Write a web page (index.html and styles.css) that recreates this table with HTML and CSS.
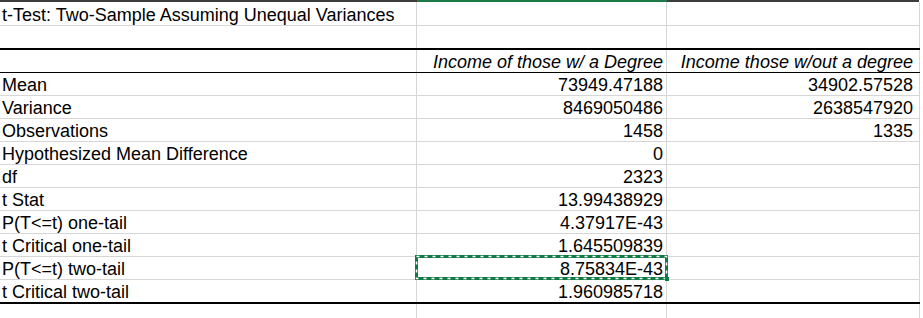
FILE: index.html
```html
<!DOCTYPE html>
<html>
<head>
<meta charset="utf-8">
<link rel="stylesheet" href="styles.css">
</head>
<body>
<div class="sheet">
  <div class="colheads">
    <div class="ch ch-a"></div>
    <div class="ch ch-b"></div>
    <div class="ch ch-c"></div>
  </div>
  <div class="row r-title">
    <div class="cell a">t-Test: Two-Sample Assuming Unequal Variances</div>
    <div class="cell b"></div>
    <div class="cell c"></div>
  </div>
  <div class="row r-blank thick">
    <div class="cell a"></div>
    <div class="cell b"></div>
    <div class="cell c"></div>
  </div>
  <div class="row r-head dark">
    <div class="cell a"></div>
    <div class="cell b hd">Income of those w/ a Degree</div>
    <div class="cell c hd">Income those w/out a degree</div>
  </div>
  <div class="row"><div class="cell a">Mean</div><div class="cell b">73949.47188</div><div class="cell c">34902.57528</div></div>
  <div class="row"><div class="cell a">Variance</div><div class="cell b">8469050486</div><div class="cell c">2638547920</div></div>
  <div class="row"><div class="cell a">Observations</div><div class="cell b">1458</div><div class="cell c">1335</div></div>
  <div class="row"><div class="cell a">Hypothesized Mean Difference</div><div class="cell b">0</div><div class="cell c"></div></div>
  <div class="row"><div class="cell a">df</div><div class="cell b">2323</div><div class="cell c"></div></div>
  <div class="row"><div class="cell a">t Stat</div><div class="cell b">13.99438929</div><div class="cell c"></div></div>
  <div class="row"><div class="cell a">P(T&lt;=t) one-tail</div><div class="cell b">4.37917E-43</div><div class="cell c"></div></div>
  <div class="row"><div class="cell a">t Critical one-tail</div><div class="cell b">1.645509839</div><div class="cell c"></div></div>
  <div class="row"><div class="cell a">P(T&lt;=t) two-tail</div><div class="cell b sel">8.75834E-43<svg class="ants" width="254" height="26" viewBox="0 0 254 26"><rect x="1.5" y="1.5" width="250" height="22" fill="none" stroke="#107a45" stroke-width="3"/><rect x="1.5" y="1.5" width="250" height="22" fill="none" stroke="#ffffff" stroke-width="1.5" stroke-dasharray="3 5"/><rect x="250" y="22" width="4" height="4" fill="#107a45"/></svg></div><div class="cell c"></div></div>
  <div class="row thick"><div class="cell a">t Critical two-tail</div><div class="cell b">1.960985718</div><div class="cell c"></div></div>
  <div class="row r-tail"><div class="cell a"></div><div class="cell b"></div><div class="cell c"></div></div>
</div>
</body>
</html>
```
FILE: styles.css
```css
html, body {
  margin: 0;
  padding: 0;
  background: #ffffff;
}
body {
  font-family: "Liberation Sans", Arial, sans-serif;
  font-size: 18px;
  color: #000;
  overflow: hidden;
}
.sheet {
  width: 920px;
}
.colheads {
  display: flex;
  height: 2px;
}
.ch { height: 2px; }
.ch-a { width: 417px; background: #3d3d3d; }
.ch-b { width: 250px; background: #1b7a48; }
.ch-c { width: 252px; background: #3d3d3d; }

.row {
  display: flex;
  height: 23px;
  box-sizing: border-box;
  border-bottom: 1px solid #d6d6d6;
}
.row.r-title { height: 24px; }
.row.thick { height: 24px; border-bottom: 2px solid #000; }
.row.dark { border-bottom: 1px solid #000; }
.row.r-tail { height: 14px; border-bottom: none; }

.cell {
  box-sizing: border-box;
  height: 100%;
  border-right: 1px solid #d6d6d6;
  display: flex;
  align-items: flex-end;
  line-height: 18px;
  padding-bottom: 1px;
  white-space: nowrap;
}
.cell.a { width: 417px; padding-left: 2px; }
.cell.b { width: 250px; justify-content: flex-end; padding-right: 3px; }
.cell.c { width: 253px; justify-content: flex-end; padding-right: 6px; }
.cell.hd { font-style: italic; }
.cell.sel { position: relative; }
.ants {
  position: absolute;
  left: -2px;
  top: -2px;
}
```
